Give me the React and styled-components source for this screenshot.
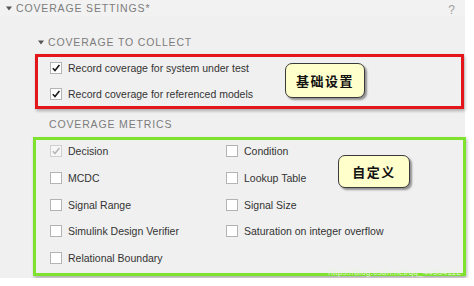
import React from "react";
import styled, { createGlobalStyle } from "styled-components";

const Global = createGlobalStyle`
  html, body { margin: 0; padding: 0; background: #ffffff; }
  body { font-family: "Liberation Sans", Arial, sans-serif; }
`;

const Panel = styled.div`
  position: relative;
  width: 465px;
  height: 278px;
  background: #f0f0f0;
  box-sizing: border-box;
`;

const HeaderRow = styled.div`
  height: 16px;
  display: flex;
  align-items: center;
  justify-content: space-between;
  padding: 0 10px 0 6px;
  background: #f2f2f2;
`;

const Title = styled.div`
  display: flex;
  align-items: center;
  gap: ${(p) => p.$gap || 4}px;
  font-size: 10.5px;
  letter-spacing: 0.85px;
  color: #7c7c7c;
  text-transform: uppercase;
  line-height: 16px;
  height: 16px;
  padding-left: ${(p) => p.$indent || 0}px;
  margin-top: ${(p) => p.$top || 0}px;
`;

const Help = styled.span`
  font-size: 12px;
  color: #a0a0a0;
  margin-top: 4px;
`;

const Body = styled.div`
  padding-left: 33px;
  width: 433px;
`;

const GroupBox = styled.div`
  position: relative;
  margin: ${(p) => p.$top}px ${(p) => p.$side}px 0;
  border: 3px solid ${(p) => p.$color};
  box-shadow: 1px 2px 3px rgba(0, 0, 0, 0.28);
  padding: ${(p) => p.$pad};
  display: grid;
  grid-template-columns: ${(p) => p.$cols};
  row-gap: ${(p) => p.$gap}px;
`;

const Item = styled.label`
  display: flex;
  align-items: center;
  gap: 6px;
  height: 22px;
  font-size: 10.5px;
  color: #333;
  white-space: nowrap;
`;

const Box = styled.span`
  width: 12px;
  height: 12px;
  box-sizing: border-box;
  border: 1px solid ${(p) => (p.$disabled ? "#cfcfcf" : "#b4b4b4")};
  background: ${(p) => (p.$disabled ? "#f7f7f7" : "#ffffff")};
  display: flex;
  align-items: center;
  justify-content: center;
  flex: none;
`;

const Note = styled.div`
  position: absolute;
  left: ${(p) => p.$left}px;
  top: ${(p) => p.$y}px;
  width: ${(p) => p.$w}px;
  height: ${(p) => p.$h}px;
  box-sizing: border-box;
  background: #ffffcc;
  border: 1.5px solid #3a3a3a;
  border-radius: 7px;
  box-shadow: 2px 2px 2px rgba(0, 0, 0, 0.4);
  display: flex;
  align-items: center;
  justify-content: center;
  font-family: "Noto Sans CJK SC", sans-serif;
  font-weight: 700;
  font-size: 13px;
  letter-spacing: 1.5px;
  color: #111;
`;

const Watermark = styled.div`
  position: absolute;
  right: 4px;
  top: 267px;
  font-size: 8.5px;
  line-height: 10px;
  color: rgba(235, 245, 225, 0.85);
  letter-spacing: 0.1px;
`;

const Arrow = () => (
  <svg width="6" height="5" viewBox="0 0 6 5">
    <path d="M0 0.5 L6 0.5 L3 4.5 Z" fill="#555" />
  </svg>
);

const Check = ({ color }) => (
  <svg width="10" height="10" viewBox="0 0 10 10">
    <path d="M1.8 5.2 L4 7.6 L8.4 2" fill="none" stroke={color} strokeWidth="1.6" />
  </svg>
);

const CheckItem = ({ label, checked, disabled }) => (
  <Item>
    <Box $disabled={disabled}>{checked && <Check color={disabled ? "#b8b8b8" : "#1e1e1e"} />}</Box>
    {label}
  </Item>
);

const metrics = [
  ["Decision", true, true],
  ["Condition"],
  ["MCDC"],
  ["Lookup Table"],
  ["Signal Range"],
  ["Signal Size"],
  ["Simulink Design Verifier"],
  ["Saturation on integer overflow"],
  ["Relational Boundary"],
];

export default function App() {
  return (
    <>
      <Global />
      <Panel>
        <HeaderRow>
          <Title>
            <Arrow />
            Coverage Settings*
          </Title>
          <Help>?</Help>
        </HeaderRow>
        <Body>
          <Title $indent={5} $top={18} $gap={4}>
            <Arrow />
            Coverage to Collect
          </Title>
          <GroupBox $color="#e3161b" $top={4} $side={2} $pad="0 0 1px 12px" $cols="1fr" $gap={4}>
            <CheckItem label="Record coverage for system under test" checked />
            <CheckItem label="Record coverage for referenced models" checked />
            <Note $left={247} $y={6} $w={80} $h={35}>基础设置</Note>
          </GroupBox>
          <Title $indent={16} $top={7}>Coverage Metrics</Title>
          <GroupBox $color="#7fe22e" $top={5} $side={0} $pad="0 0 4px 14px" $cols="176px 1fr" $gap={4.75}>
            {metrics.map(([l, c, d]) => (
              <CheckItem key={l} label={l} checked={c} disabled={d} />
            ))}
            <Note $left={302} $y={15} $w={72} $h={33}>自定义</Note>
          </GroupBox>
        </Body>
        <Watermark>https://blog.csdn.net/qq_44684112</Watermark>
      </Panel>
    </>
  );
}
